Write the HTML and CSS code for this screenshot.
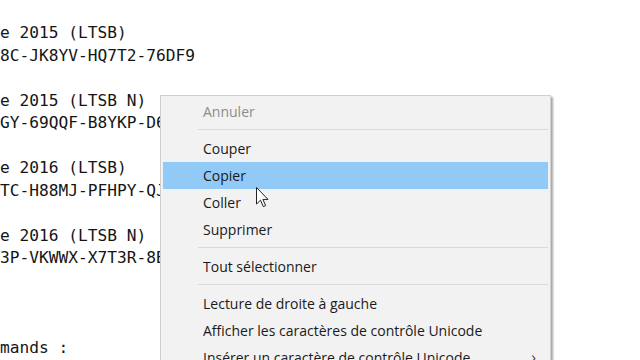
FILE: index.html
```html
<!DOCTYPE html>
<html lang="fr">
<head>
  <meta charset="UTF-8">
  <meta name="viewport" content="width=device-width, initial-scale=1.0">
  <title>Clés LTSB</title>
  <link rel="stylesheet" href="styles.css">
</head>
<body>
  <pre class="notes">e 2015 (LTSB)
8C-JK8YV-HQ7T2-76DF9

e 2015 (LTSB N)
GY-69QQF-B8YKP-D69TJ

e 2016 (LTSB)
TC-H88MJ-PFHPY-QJ4BJ

e 2016 (LTSB N)
3P-VKWWX-X7T3R-8B639



mands :</pre>

  <ul class="context-menu">
    <li class="item disabled">Annuler</li>
    <li class="sep"></li>
    <li class="item">Couper</li>
    <li class="item active">Copier</li>
    <li class="item">Coller</li>
    <li class="item">Supprimer</li>
    <li class="sep"></li>
    <li class="item">Tout sélectionner</li>
    <li class="sep"></li>
    <li class="item">Lecture de droite à gauche</li>
    <li class="item">Afficher les caractères de contrôle Unicode</li>
    <li class="item has-sub">Insérer un caractère de contrôle Unicode <span class="arrow">&#x203A;</span></li>
  </ul>

  <!-- mouse pointer -->
  <svg class="cursor" width="13" height="21" viewBox="0 0 13 21">
    <path d="M0.5 0.5 L0.5 17 L4.5 13.2 L7.3 19.6 L9.6 18.6 L6.9 12.4 L12 12.4 Z" fill="#fff" stroke="#222" stroke-width="1" stroke-linejoin="round"/>
  </svg>
</body>
</html>
```

FILE: styles.css
```css
html, body {
  margin: 0;
  background: #fff;
  overflow: hidden;
}

body {
  position: relative;
  width: 640px;
  height: 360px;
}

.notes {
  margin: 0;
  padding-top: 22px;
  font-family: "DejaVu Sans Mono", "Liberation Mono", monospace;
  font-size: 16.2px;
  line-height: 22.5px;
  color: #151515;
}

.context-menu {
  position: absolute;
  left: 160px;
  top: 95px;
  width: 385px;
  margin: 0;
  padding: 2px;
  list-style: none;
  background: #f2f2f2;
  border: 1px solid #cfcfcf;
  box-shadow: 2px 2px 2px rgba(0, 0, 0, 0.35);
  font-family: "Open Sans", "Noto Sans", sans-serif;
  font-size: 14px;
  color: #1a1a1a;
}

.item {
  position: relative;
  height: 27px;
  line-height: 27px;
  padding-left: 40px;
  white-space: nowrap;
}

.item.disabled {
  color: #8c8c8c;
}

.item.active {
  background: #91c9f7;
}

.sep {
  height: 1px;
  margin: 4px 0 5px 35px;
  background: #d9d9d9;
}

.arrow {
  position: absolute;
  right: 12px;
  top: 0;
  font-size: 16px;
  color: #444;
}

.cursor {
  position: absolute;
  left: 256px;
  top: 187px;
}
```
